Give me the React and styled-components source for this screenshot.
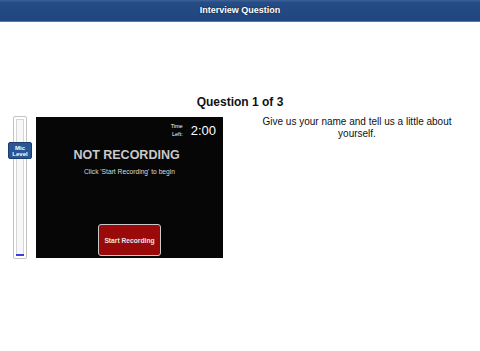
import styled, { createGlobalStyle } from "styled-components";

const GlobalStyle = createGlobalStyle`
  body {
    margin: 0;
    background: #ffffff;
    font-family: "Liberation Sans", Arial, sans-serif;
  }
`;

export default function App() {
  return (
    <>
      <GlobalStyle />
      <Header>Interview Question</Header>
      <Main>
        <QuestionTitle>Question 1 of 3</QuestionTitle>
        <Row>
          <MicColumn>
            <MicTrack>
              <MicLevelBar />
            </MicTrack>
            <MicBadge>
              Mic
              <br />
              Level
            </MicBadge>
          </MicColumn>
          <VideoBox>
            <TimerRow>
              <TimerLabel>
                Time
                <br />
                Left:
              </TimerLabel>
              <Clock>2:00</Clock>
            </TimerRow>
            <Status>NOT RECORDING</Status>
            <Hint>Click 'Start Recording' to begin</Hint>
            <RecordButton>Start Recording</RecordButton>
          </VideoBox>
          <Prompt>Give us your name and tell us a little about yourself.</Prompt>
        </Row>
      </Main>
    </>
  );
}

const Header = styled.div`
  height: 21px;
  line-height: 21px;
  background: linear-gradient(#3e6198 0, #264c85 12%, #21467f 100%);
  border-bottom: 1px solid #6f7580;
  color: #ffffff;
  font-size: 9px;
  font-weight: bold;
  text-align: center;
  text-shadow: 0 0 2px rgba(0, 0, 0, 0.6);
`;

const Main = styled.div`
  padding-top: 73px;
`;

const QuestionTitle = styled.h2`
  margin: 0;
  font-size: 12px;
  line-height: 14px;
  font-weight: bold;
  color: #111111;
  text-align: center;
`;

const Row = styled.div`
  display: flex;
  align-items: flex-start;
  margin-top: 7px;
  padding-left: 8px;
`;

const MicColumn = styled.div`
  position: relative;
  display: flex;
  justify-content: center;
  width: 24px;
`;

const MicTrack = styled.div`
  position: relative;
  box-sizing: border-box;
  width: 14px;
  height: 143px;
  border: 1px solid #c4c4c4;
  border-radius: 2px;
  background: #f7f7f7;
  box-shadow: inset 0 0 0 2px #ffffff, inset 0 0 0 3px #d6d6d6;
`;

const MicLevelBar = styled.div`
  position: absolute;
  left: 2px;
  right: 2px;
  bottom: 2px;
  height: 2px;
  background: #3a3fe0;
`;

const MicBadge = styled.div`
  position: absolute;
  top: 26px;
  left: 0;
  box-sizing: border-box;
  width: 24px;
  height: 17px;
  padding-top: 2px;
  background: #2a5694;
  border: 1px solid #1c3d70;
  border-radius: 2px;
  color: #ffffff;
  font-size: 6px;
  line-height: 6px;
  font-weight: bold;
  text-align: center;
`;

const VideoBox = styled.div`
  box-sizing: border-box;
  display: flex;
  flex-direction: column;
  align-items: center;
  width: 187px;
  height: 141px;
  margin-top: 1px;
  margin-left: 4px;
  padding: 5px 7px 2px;
  background: #060606;
`;

const TimerRow = styled.div`
  display: flex;
  align-self: flex-end;
  align-items: flex-end;
  gap: 8px;
`;

const TimerLabel = styled.div`
  color: #ffffff;
  font-size: 5.5px;
  line-height: 8px;
  text-align: right;
`;

const Clock = styled.div`
  color: #ffffff;
  font-size: 13px;
  line-height: 15px;
`;

const Status = styled.div`
  margin-top: 10px;
  padding-right: 6px;
  color: #c9c9c9;
  font-size: 12.5px;
  line-height: 14px;
  font-weight: bold;
`;

const Hint = styled.div`
  margin-top: 6px;
  color: #dddddd;
  font-size: 6.7px;
  line-height: 8px;
`;

const RecordButton = styled.button`
  box-sizing: border-box;
  width: 63px;
  height: 32px;
  margin-top: auto;
  padding: 0;
  background: #9b0a0a;
  border: 1px solid #c9c9c9;
  border-radius: 3px;
  color: #e4e4e4;
  font-family: "Liberation Sans", Arial, sans-serif;
  font-size: 6.7px;
  font-weight: bold;
`;

const Prompt = styled.p`
  flex: 1;
  margin: 0 0 0 11px;
  padding: 0 24px;
  color: #111111;
  font-size: 10px;
  line-height: 12px;
  text-align: center;
`;
